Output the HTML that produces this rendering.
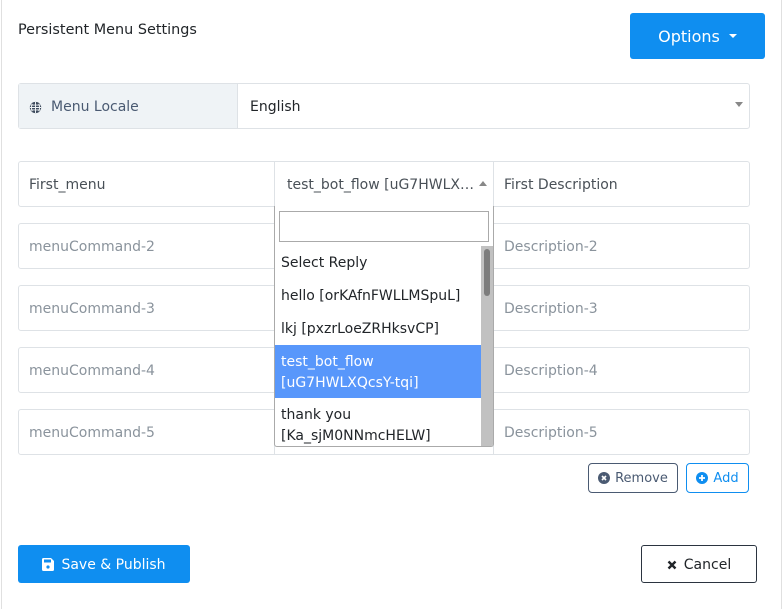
<!DOCTYPE html>
<html style="overflow:hidden;height:609px"><head><style>
*{box-sizing:border-box;margin:0;padding:0}
body{width:783px;height:609px;background:#fff;font-family:"DejaVu Sans","Liberation Sans",sans-serif;font-size:14px;color:#212529;position:relative;overflow:hidden}
.a{position:absolute}
.frame{left:1px;top:-2px;width:781px;height:616px;border:1px solid #e0e0e0}
.row{position:absolute;left:18px;width:732px;height:46px;border:1px solid #dee2e6;border-radius:3px;display:flex}
.row div{height:100%;display:flex;align-items:center;padding-left:10px;padding-top:2px;color:#8a939c}
.c1{width:256px;border-right:1px solid #dee2e6}
.c2{width:219px;border-right:1px solid #dee2e6}
.opt{position:absolute;left:0;width:206px;padding-left:6px;color:#212529}
</style></head><body>
<div class="a frame"></div>
<div class="a" style="left:18px;top:22px;font-size:14.4px;color:#212529">Persistent Menu Settings</div>
<div class="a" style="left:630px;top:13px;width:135px;height:46px;background:#0f8ef0;border-radius:3px;color:#fff;font-size:16px;display:flex;align-items:center;justify-content:center">Options<span style="margin-left:9px;border-left:4px solid transparent;border-right:4px solid transparent;border-top:4px solid #fff"></span></div>

<div class="row" style="top:83px;height:46px">
 <div style="width:219px;background:#eff3f6;color:#4a5a72;padding-left:10px;border-right:1px solid #dee2e6">
  <svg width="13" height="13" viewBox="0 0 16 16" style="margin-right:9px"><circle cx="8" cy="8" r="7" fill="#3d4a5c"/><path d="M1 8h14M8 1v14M4 3.5q-2 4.5 0 9M12 3.5q2 4.5 0 9M2 5h12M2 11h12" stroke="#eff3f6" stroke-width="1.2" fill="none"/></svg>Menu Locale</div>
 <div style="flex:1;color:#212529;padding-left:12px;position:relative">English<span style="position:absolute;right:6px;top:18px;border-left:4px solid transparent;border-right:4px solid transparent;border-top:5px solid #888"></span></div>
</div>

<div class="row" style="top:161px"><div class="c1" style="color:#495057">First_menu</div><div class="c2" style="color:#495057;padding-left:12px;position:relative">test_bot_flow [uG7HWLX…<span style="position:absolute;right:6px;top:19px;border-left:4px solid transparent;border-right:4px solid transparent;border-bottom:5px solid #888"></span></div><div style="color:#495057">First Description</div></div>
<div class="row" style="top:223px"><div class="c1">menuCommand-2</div><div class="c2"></div><div>Description-2</div></div>
<div class="row" style="top:285px"><div class="c1">menuCommand-3</div><div class="c2"></div><div>Description-3</div></div>
<div class="row" style="top:347px"><div class="c1">menuCommand-4</div><div class="c2"></div><div>Description-4</div></div>
<div class="row" style="top:409px"><div class="c1">menuCommand-5</div><div class="c2"></div><div>Description-5</div></div>

<div class="a" style="left:274px;top:206px;width:220px;height:241px;background:#fff;border:1px solid #aaa;border-top:none;border-radius:0 0 3px 3px;overflow:hidden">
 <div class="a" style="left:4px;top:5px;width:210px;height:31px;border:1px solid #aaa"></div>
 <div class="opt" style="top:49px">Select Reply</div>
 <div class="opt" style="top:82px">hello [orKAfnFWLLMSpuL]</div>
 <div class="opt" style="top:115px">lkj [pxzrLoeZRHksvCP]</div>
 <div class="opt" style="top:139px;height:53px;background:#5897fb;color:#fff;padding-top:7px;line-height:21px">test_bot_flow<br>[uG7HWLXQcsY-tqi]</div>
 <div class="opt" style="top:199px;line-height:21px">thank you<br>[Ka_sjM0NNmcHELW]</div>
 <div class="a" style="left:206px;top:40px;width:12px;height:201px;background:#c1c1c1"></div>
 <div class="a" style="left:209px;top:43px;width:6px;height:47px;background:#7d7d7d;border-radius:3px"></div>
</div>

<div class="a" style="left:588px;top:463px;width:90px;height:30px;border:1px solid #4a5a72;border-radius:4px;color:#4a5a72;font-size:13px;display:flex;align-items:center;justify-content:center"><svg width="12" height="12" viewBox="0 0 12 12" style="margin-right:5px"><circle cx="6" cy="6" r="6" fill="#4a5a72"/><path d="M4 4l4 4M8 4l-4 4" stroke="#fff" stroke-width="1.6"/></svg>Remove</div>
<div class="a" style="left:686px;top:463px;width:63px;height:30px;border:1px solid #0f8ef0;border-radius:4px;color:#0f8ef0;font-size:13px;display:flex;align-items:center;justify-content:center"><svg width="12" height="12" viewBox="0 0 12 12" style="margin-right:5px"><circle cx="6" cy="6" r="6" fill="#0f8ef0"/><path d="M6 3v6M3 6h6" stroke="#fff" stroke-width="1.8"/></svg>Add</div>

<div class="a" style="left:18px;top:545px;width:172px;height:38px;background:#0f8ef0;border-radius:3px;color:#fff;display:flex;align-items:center;justify-content:center;padding-top:1px"><svg width="12" height="13" viewBox="0 0 12 13" style="margin-right:7px"><path d="M0 1.5Q0 0 1.5 0H9l3 3v8.5Q12 13 10.5 13h-9Q0 13 0 11.5z" fill="#fff"/><rect x="2" y="1.5" width="7" height="3" fill="#0f8ef0"/><circle cx="6" cy="9" r="1.6" fill="#0f8ef0"/></svg>Save &amp; Publish</div>
<div class="a" style="left:641px;top:545px;width:116px;height:38px;border:1px solid #2b3440;border-radius:3px;color:#212529;display:flex;align-items:center;justify-content:center;padding-top:1px"><svg width="10" height="10" viewBox="0 0 10 10" style="margin-right:7px"><path d="M1.5 1.5l7 7M8.5 1.5l-7 7" stroke="#212529" stroke-width="2.4"/></svg>Cancel</div>
</body></html>
